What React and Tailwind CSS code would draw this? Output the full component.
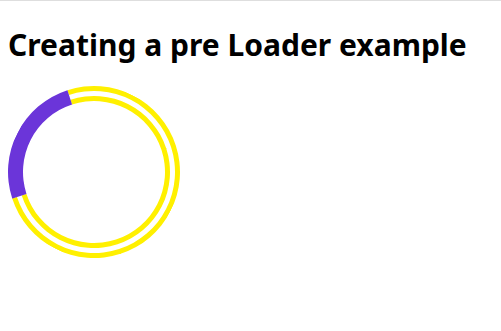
export default function App() {
  return (
    <div className="w-[501px] h-[331px] bg-white border-t border-[#dedede] px-2 overflow-hidden">
      <h1 className="mt-[24px] text-[30px] leading-[40px] font-bold text-black" style={{ fontFamily: '"Noto Sans", sans-serif' }}>
        Creating a pre Loader example
      </h1>
      <div className="mt-[21px] w-[172px] h-[172px] rounded-full border-[15px] border-double border-[#fff000] border-l-[#6b35d9] [border-left-style:solid] rotate-[27deg]" />
    </div>
  );
}
